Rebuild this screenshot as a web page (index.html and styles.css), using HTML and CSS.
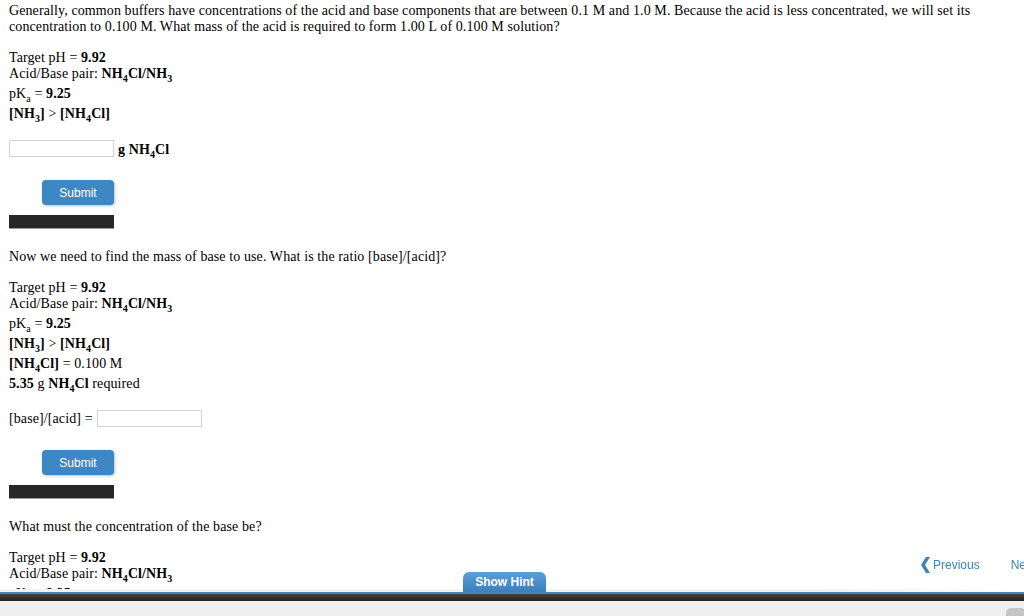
FILE: index.html
```html
<!DOCTYPE html>
<html lang="en">
<head>
    <meta charset="UTF-8">
    <title>Buffer Preparation</title>
    <link rel="stylesheet" href="styles.css">
</head>
<body>
    <div class="content">
        <div class="part">
            <p class="question">Generally, common buffers have concentrations of the acid and base components that are between 0.1 M and 1.0 M. Because the acid is less concentrated, we will set its concentration to 0.100 M. What mass of the acid is required to form 1.00 L of 0.100 M solution?</p>
            <div class="given">
                <div>Target pH = <b>9.92</b></div>
                <div>Acid/Base pair: <b>NH<sub>4</sub>Cl/NH<sub>3</sub></b></div>
                <div>pK<sub>a</sub> = <b>9.25</b></div>
                <div><b>[NH<sub>3</sub>]</b> &gt; <b>[NH<sub>4</sub>Cl]</b></div>
            </div>
            <div class="answer-row">
                <input type="text" class="answer">
                <span class="unit"><b>g NH<sub>4</sub>Cl</b></span>
            </div>
            <button class="submit">Submit</button>
            <div class="feedback"></div>
        </div>

        <div class="part">
            <p class="question">Now we need to find the mass of base to use. What is the ratio [base]/[acid]?</p>
            <div class="given">
                <div>Target pH = <b>9.92</b></div>
                <div>Acid/Base pair: <b>NH<sub>4</sub>Cl/NH<sub>3</sub></b></div>
                <div>pK<sub>a</sub> = <b>9.25</b></div>
                <div><b>[NH<sub>3</sub>]</b> &gt; <b>[NH<sub>4</sub>Cl]</b></div>
                <div><b>[NH<sub>4</sub>Cl]</b> = 0.100 M</div>
                <div><b>5.35</b> g <b>NH<sub>4</sub>Cl</b> required</div>
            </div>
            <div class="answer-row">
                <span class="label">[base]/[acid] =</span>
                <input type="text" class="answer">
            </div>
            <button class="submit">Submit</button>
            <div class="feedback"></div>
        </div>

        <div class="part">
            <p class="question">What must the concentration of the base be?</p>
            <div class="given">
                <div>Target pH = <b>9.92</b></div>
                <div>Acid/Base pair: <b>NH<sub>4</sub>Cl/NH<sub>3</sub></b></div>
                <div>pK<sub>a</sub> = <b>9.25</b></div>
                <div><b>[NH<sub>3</sub>]</b> &gt; <b>[NH<sub>4</sub>Cl]</b></div>
            </div>
        </div>
    </div>

    <div class="footer">
        <div class="footer-top">
            <a class="hint-tab">Show Hint</a>
            <div class="nav">
                <a class="nav-link">
                    <svg width="9" height="16" viewBox="0 0 9 16"><polygon points="9,0 5,0 0,8 5,16 9,16 4,8" fill="#3a82c0"/></svg>
                    Previous
                </a>
                <a class="nav-link next">Next</a>
            </div>
        </div>
        <div class="strip"></div>
        <div class="blue-line"></div>
        <div class="dark-bar"></div>
        <div class="gray-area">
            <div class="corner-btn"></div>
        </div>
    </div>
</body>
</html>
```

FILE: styles.css
```css
body {
    margin: 0;
    background-color: white;
    font-family: 'Liberation Serif', 'Times New Roman', serif;
    font-size: 14px;
    color: #000;
}
.content {
    padding: 3px 9px 0 9px;
    letter-spacing: 0.1px;
}
.question {
    margin: 0;
    line-height: 16px;
}
.given {
    margin-top: 15px;
}
.given > div {
    line-height: 16px;
    padding-bottom: 4px;
}
.given > div:first-child {
    padding-bottom: 0;
}
sub {
    font-size: 10px;
    line-height: 0;
}
.answer-row {
    display: flex;
    align-items: center;
    gap: 4px;
    margin-top: 14px;
    height: 17px;
}
.answer {
    width: 105px;
    height: 17px;
    margin: 0;
    padding: 0;
    border: 1px solid #d4d4d4;
    box-sizing: border-box;
}
.unit {
    padding-top: 2px;
}
.submit {
    display: block;
    margin: 23px 0 0 33px;
    width: 72px;
    height: 25px;
    border: none;
    border-radius: 4px;
    background-color: #3d87c4;
    color: white;
    font-family: 'Liberation Sans', Arial, sans-serif;
    font-size: 12px;
    box-shadow: 1px 1px 3px rgba(0,0,0,0.25);
    cursor: pointer;
}
.feedback {
    margin-top: 10px;
    width: 105px;
    height: 13px;
    background-color: #27272a;
    border-bottom: 1px solid #9a9a9a;
    margin-bottom: 20px;
}
.footer {
    position: fixed;
    left: 0;
    right: 0;
    bottom: 0;
    overflow: hidden;
    font-family: 'Liberation Sans', Arial, sans-serif;
}
.footer-top {
    display: flex;
    align-items: flex-end;
    height: 40px;
}
.hint-tab {
    flex-shrink: 0;
    margin-left: 463px;
    width: 83px;
    height: 20px;
    line-height: 21px;
    border-radius: 6px 6px 0 0;
    background: linear-gradient(#5a9fd6, #3a80bf);
    color: white;
    font-size: 12px;
    font-weight: bold;
    text-align: center;
    position: relative;
    top: 3px;
}
.nav {
    flex-shrink: 0;
    display: flex;
    align-self: flex-start;
    margin-left: 375px;
    margin-top: 8px;
    white-space: nowrap;
    gap: 31px;
}
.nav-link {
    display: flex;
    align-items: center;
    gap: 3px;
    color: #3a82c0;
    font-size: 12px;
}
.strip {
    height: 3px;
    background: linear-gradient(to right, #f2f2f2 80%, #fff);
}
.blue-line {
    height: 2px;
    background-color: #3a87c8;
}
.dark-bar {
    height: 7px;
    background: linear-gradient(#464646, #202020);
}
.gray-area {
    height: 15px;
    background-color: #efefef;
    display: flex;
    justify-content: flex-end;
    align-items: flex-end;
}
.corner-btn {
    width: 20px;
    height: 8px;
    margin-right: -2px;
    border-radius: 5px 5px 0 0;
    background-color: #c4c4c4;
}
```
